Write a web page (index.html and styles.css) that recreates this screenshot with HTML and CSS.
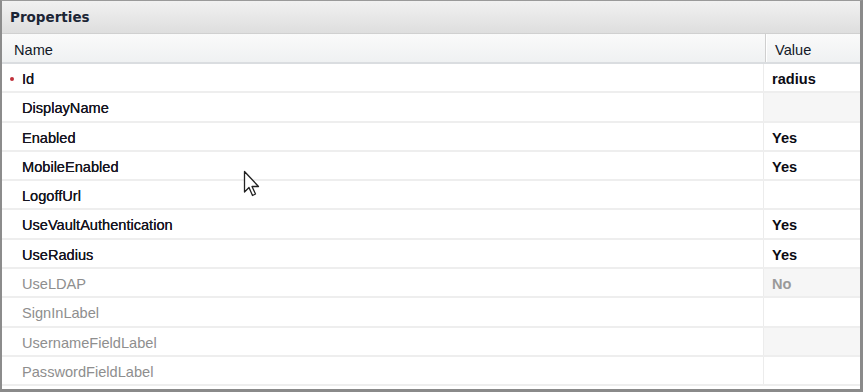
FILE: index.html
```html
<!DOCTYPE html>
<html>
<head>
<meta charset="utf-8">
<link rel="stylesheet" href="styles.css">
</head>
<body>
<div class="panel">
  <div class="title">Properties</div>
  <div class="header">
    <div class="hname">Name</div>
    <div class="hvalue">Value</div>
  </div>
  <div class="rows">
    <div class="row"><div class="name"><span class="req"></span>Id</div><div class="value">radius</div></div>
    <div class="row"><div class="name">DisplayName</div><div class="value shade"></div></div>
    <div class="row"><div class="name">Enabled</div><div class="value">Yes</div></div>
    <div class="row"><div class="name">MobileEnabled</div><div class="value">Yes</div></div>
    <div class="row"><div class="name">LogoffUrl</div><div class="value"></div></div>
    <div class="row"><div class="name">UseVaultAuthentication</div><div class="value">Yes</div></div>
    <div class="row"><div class="name">UseRadius</div><div class="value">Yes</div></div>
    <div class="row dis"><div class="name">UseLDAP</div><div class="value shade">No</div></div>
    <div class="row dis"><div class="name">SignInLabel</div><div class="value"></div></div>
    <div class="row dis"><div class="name">UsernameFieldLabel</div><div class="value shade"></div></div>
    <div class="row dis"><div class="name">PasswordFieldLabel</div><div class="value"></div></div>
  </div>
  <svg class="cursor" width="20" height="28" viewBox="0 0 20 28">
    <path d="M1.5 1.5 L1.5 22 L6 17.5 L9.5 25.5 L12.5 24 L9 16.5 L15.5 16.5 Z" fill="#fff" stroke="#222" stroke-width="1.3" stroke-linejoin="round"/>
  </svg>
</div>
</body>
</html>
```
FILE: styles.css
```css
html, body {
  margin: 0;
  padding: 0;
  background: #fff;
}
.panel {
  position: relative;
  width: 863px;
  height: 392px;
  box-sizing: border-box;
  border-top: 1px solid #9a9a9a;
  border-left: 2px solid #8c8c8c;
  border-right: 3px solid #8a8a8a;
  border-bottom: 3px solid #8a8a8a;
  overflow: hidden;
  font-family: "Liberation Sans", Arial, sans-serif;
  font-size: 14.6px;
  color: #111;
}
.title {
  height: 33px;
  box-sizing: border-box;
  padding: 8px 0 0 8px;
  background: linear-gradient(#f1f1f1, #dedede);
  border-bottom: 1px solid #d0d0d0;
  font-family: "DejaVu Sans", Verdana, sans-serif;
  font-weight: bold;
  font-size: 13.5px;
  color: #1c2535;
}
.header {
  display: flex;
  height: 30px;
  box-sizing: border-box;
  background: linear-gradient(#fafafa, #eff1f2);
  border-bottom: 2px solid #dadde0;
}
.hname {
  width: 764px;
  box-sizing: border-box;
  padding: 8px 0 0 12px;
  border-right: 1px solid #cfcfcf;
  box-shadow: 1px 0 0 #fff;
  color: #111827;
}
.hvalue {
  flex: 1;
  padding: 8px 0 0 9px;
  color: #111827;
}
.rows {
  display: flex;
  flex-direction: column;
}
.row {
  display: flex;
  height: 29.3px;
  box-sizing: border-box;
  border-bottom: 2px solid #eeeeee;
}
.name {
  position: relative;
  width: 762px;
  box-sizing: border-box;
  padding: 7px 0 0 20px;
  border-right: 1px solid #ececec;
  color: #151520;
  text-shadow: 0 0 0.3px #151520;
}
.value {
  flex: 1;
  padding: 7px 0 0 8px;
  font-weight: bold;
  color: #0b0b14;
}
.value.shade {
  background: #f6f6f6;
}
.req {
  position: absolute;
  left: 8px;
  top: 13px;
  width: 4px;
  height: 4px;
  border-radius: 50%;
  background: #c0303a;
}
.dis .name {
  color: #8e8e8e;
  text-shadow: none;
}
.dis .value {
  color: #9a9a9a;
}
.cursor {
  position: absolute;
  left: 241px;
  top: 169px;
}
```
